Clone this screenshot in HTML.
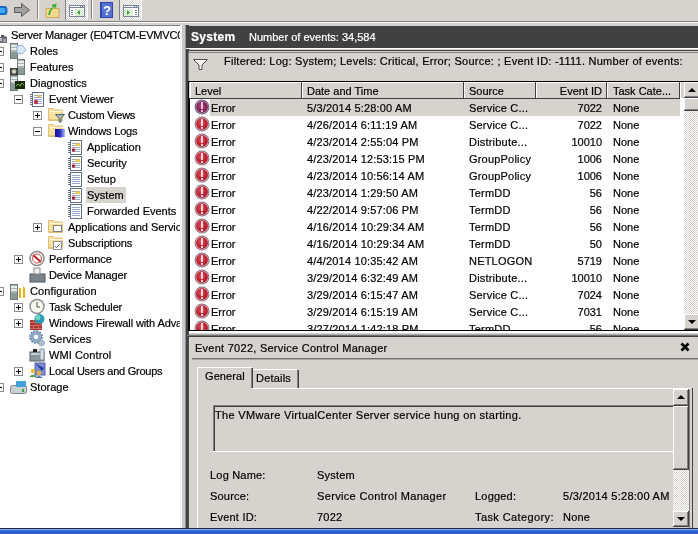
<!DOCTYPE html>
<html><head><meta charset="utf-8">
<style>
*{margin:0;padding:0;box-sizing:border-box}
html,body{width:698px;height:534px;overflow:hidden;background:#d6d3ce;font-family:"Liberation Sans",sans-serif;font-size:11px;color:#000}
.a{position:absolute}
.t{position:absolute;white-space:nowrap;will-change:transform;-webkit-text-stroke-width:0.2px}
</style></head><body>

<div class="a" style="left:0px;top:0px;width:698px;height:21px;background:#d6d3ce;"></div>
<div class="a" style="left:0px;top:21px;width:698px;height:1px;background:#808080;"></div>
<div class="a" style="left:0px;top:22px;width:698px;height:1px;background:#fff;"></div>
<div class="a" style="left:0px;top:25px;width:180px;height:1px;background:#808080;"></div>
<div class="a" style="left:0px;top:26px;width:180px;height:502px;background:#fff;"></div>
<div class="a" style="left:180px;top:25px;width:2px;height:503px;background:#f4f4f4;"></div>
<div class="a" style="left:182px;top:25px;width:3px;height:503px;background:#c8c8c8;"></div>
<div class="a" style="left:185px;top:25px;width:1px;height:503px;background:#909090;"></div>
<div class="a" style="left:186px;top:25px;width:2px;height:503px;background:#404040;"></div>
<div class="a" style="left:188px;top:25px;width:1px;height:503px;background:#505050;"></div>
<div class="a" style="left:0;top:0;width:180px;height:528px;overflow:hidden">
<div class="t" style="left:11px;top:27px;line-height:16px;height:16px;letter-spacing:-0.2px;">Server Manager (E04TCM-EVMVC01)</div>
<div class="t" style="left:30px;top:43px;line-height:16px;height:16px;">Roles</div>
<div class="t" style="left:30px;top:59px;line-height:16px;height:16px;">Features</div>
<div class="t" style="left:30px;top:75px;line-height:16px;height:16px;">Diagnostics</div>
<div class="t" style="left:49px;top:91px;line-height:16px;height:16px;">Event Viewer</div>
<div class="t" style="left:68px;top:107px;line-height:16px;height:16px;letter-spacing:-0.25px;">Custom Views</div>
<div class="t" style="left:68px;top:123px;line-height:16px;height:16px;letter-spacing:-0.18px;">Windows Logs</div>
<div class="t" style="left:87px;top:139px;line-height:16px;height:16px;">Application</div>
<div class="t" style="left:87px;top:155px;line-height:16px;height:16px;">Security</div>
<div class="t" style="left:87px;top:171px;line-height:16px;height:16px;">Setup</div>
<div class="a" style="left:86px;top:187px;width:40px;height:16px;background:#d6d3ce;"></div>
<div class="t" style="left:87px;top:187px;line-height:16px;height:16px;">System</div>
<div class="t" style="left:87px;top:203px;line-height:16px;height:16px;">Forwarded Events</div>
<div class="t" style="left:68px;top:219px;line-height:16px;height:16px;letter-spacing:-0.05px;">Applications and Services Logs</div>
<div class="t" style="left:68px;top:235px;line-height:16px;height:16px;letter-spacing:-0.15px;">Subscriptions</div>
<div class="t" style="left:49px;top:251px;line-height:16px;height:16px;">Performance</div>
<div class="t" style="left:49px;top:267px;line-height:16px;height:16px;letter-spacing:-0.15px;">Device Manager</div>
<div class="t" style="left:30px;top:283px;line-height:16px;height:16px;letter-spacing:0.1px;">Configuration</div>
<div class="t" style="left:49px;top:299px;line-height:16px;height:16px;letter-spacing:-0.15px;">Task Scheduler</div>
<div class="t" style="left:49px;top:315px;line-height:16px;height:16px;letter-spacing:-0.1px;">Windows Firewall with Advanced Security</div>
<div class="t" style="left:49px;top:331px;line-height:16px;height:16px;">Services</div>
<div class="t" style="left:49px;top:347px;line-height:16px;height:16px;letter-spacing:0.1px;">WMI Control</div>
<div class="t" style="left:49px;top:363px;line-height:16px;height:16px;letter-spacing:-0.24px;">Local Users and Groups</div>
<div class="t" style="left:30px;top:379px;line-height:16px;height:16px;">Storage</div>
</div>
<div class="a" style="left:186px;top:26px;width:512px;height:22px;background:#414141;"></div>
<div class="a" style="left:186px;top:48px;width:512px;height:1px;background:#fff;"></div>
<div class="t" style="left:191px;top:29px;line-height:16px;height:16px;letter-spacing:0.3px;color:#fff;font-weight:bold;font-size:12px">System</div>
<div class="t" style="left:249px;top:29px;line-height:16px;height:16px;color:#fff">Number of events: 34,584</div>
<div class="a" style="left:186px;top:50px;width:512px;height:1px;background:#404040;"></div>
<div class="a" style="left:186px;top:50px;width:1px;height:281px;background:#404040;"></div>
<div class="a" style="left:188px;top:52px;width:510px;height:1px;background:#808080;"></div>
<div class="a" style="left:188px;top:52px;width:1px;height:278px;background:#808080;"></div>
<div class="t" style="left:224px;top:53px;line-height:16px;height:16px;letter-spacing:0.255px;">Filtered: Log: System; Levels: Critical, Error; Source: ; Event ID: -1111. Number of events:</div>
<div class="a" style="left:188px;top:81px;width:510px;height:1px;background:#000;"></div>
<div class="a" style="left:189px;top:82px;width:509px;height:248px;background:#fff;"></div>
<div class="a" style="left:188px;top:330px;width:510px;height:1px;background:#000;"></div>
<div class="a" style="left:188px;top:81px;width:2px;height:250px;background:#000;"></div>
<div class="a" style="left:189px;top:82px;width:495px;height:17px;background:#d6d3ce;"></div>
<div class="a" style="left:189px;top:98px;width:491px;height:1px;background:#404040;"></div>
<div class="a" style="left:190px;top:82px;width:490px;height:1px;background:#fff;"></div>
<div class="a" style="left:190px;top:82px;width:1px;height:16px;background:#fff;"></div>
<div class="a" style="left:301px;top:82px;width:1px;height:16px;background:#404040;"></div>
<div class="a" style="left:302px;top:82px;width:1px;height:16px;background:#fff;"></div>
<div class="a" style="left:463px;top:82px;width:1px;height:16px;background:#404040;"></div>
<div class="a" style="left:464px;top:82px;width:1px;height:16px;background:#fff;"></div>
<div class="a" style="left:535px;top:82px;width:1px;height:16px;background:#404040;"></div>
<div class="a" style="left:536px;top:82px;width:1px;height:16px;background:#fff;"></div>
<div class="a" style="left:606px;top:82px;width:1px;height:16px;background:#404040;"></div>
<div class="a" style="left:607px;top:82px;width:1px;height:16px;background:#fff;"></div>
<div class="a" style="left:679px;top:82px;width:1px;height:16px;background:#404040;"></div>
<div class="a" style="left:680px;top:82px;width:1px;height:16px;background:#fff;"></div>
<div class="t" style="left:195px;top:84px;line-height:15px;height:15px;">Level</div>
<div class="t" style="left:307px;top:84px;line-height:15px;height:15px;">Date and Time</div>
<div class="t" style="left:469px;top:84px;line-height:15px;height:15px;">Source</div>
<div class="t" style="left:537px;top:84px;line-height:15px;height:15px;width:65px;text-align:right">Event ID</div>
<div class="t" style="left:613px;top:84px;line-height:15px;height:15px;">Task Cate...</div>
<div class="a" style="left:189px;top:99px;width:491px;height:231px;overflow:hidden">
<div class="a" style="left:21px;top:0px;width:470px;height:17px;background:#d6d3ce;"></div>
<svg class="a" style="left:5px;top:0px" width="16" height="16"><use href="#errsel"/></svg>
<div class="t" style="left:22px;top:2px;line-height:15px;height:15px;">Error</div>
<div class="t" style="left:118px;top:2px;line-height:15px;height:15px;letter-spacing:0.17px;">5/3/2014 5:28:00 AM</div>
<div class="t" style="left:280px;top:2px;line-height:15px;height:15px;letter-spacing:0.2px;">Service C...</div>
<div class="t" style="left:348px;top:2px;line-height:15px;height:15px;width:65px;text-align:right">7022</div>
<div class="t" style="left:424px;top:2px;line-height:15px;height:15px;">None</div>
<svg class="a" style="left:5px;top:17px" width="16" height="16"><use href="#err"/></svg>
<div class="t" style="left:22px;top:19px;line-height:15px;height:15px;">Error</div>
<div class="t" style="left:118px;top:19px;line-height:15px;height:15px;letter-spacing:0.17px;">4/26/2014 6:11:19 AM</div>
<div class="t" style="left:280px;top:19px;line-height:15px;height:15px;letter-spacing:0.2px;">Service C...</div>
<div class="t" style="left:348px;top:19px;line-height:15px;height:15px;width:65px;text-align:right">7022</div>
<div class="t" style="left:424px;top:19px;line-height:15px;height:15px;">None</div>
<svg class="a" style="left:5px;top:34px" width="16" height="16"><use href="#err"/></svg>
<div class="t" style="left:22px;top:36px;line-height:15px;height:15px;">Error</div>
<div class="t" style="left:118px;top:36px;line-height:15px;height:15px;letter-spacing:0.17px;">4/23/2014 2:55:04 PM</div>
<div class="t" style="left:280px;top:36px;line-height:15px;height:15px;letter-spacing:0.2px;">Distribute...</div>
<div class="t" style="left:348px;top:36px;line-height:15px;height:15px;width:65px;text-align:right">10010</div>
<div class="t" style="left:424px;top:36px;line-height:15px;height:15px;">None</div>
<svg class="a" style="left:5px;top:51px" width="16" height="16"><use href="#err"/></svg>
<div class="t" style="left:22px;top:53px;line-height:15px;height:15px;">Error</div>
<div class="t" style="left:118px;top:53px;line-height:15px;height:15px;letter-spacing:0.17px;">4/23/2014 12:53:15 PM</div>
<div class="t" style="left:280px;top:53px;line-height:15px;height:15px;letter-spacing:0.2px;">GroupPolicy</div>
<div class="t" style="left:348px;top:53px;line-height:15px;height:15px;width:65px;text-align:right">1006</div>
<div class="t" style="left:424px;top:53px;line-height:15px;height:15px;">None</div>
<svg class="a" style="left:5px;top:68px" width="16" height="16"><use href="#err"/></svg>
<div class="t" style="left:22px;top:70px;line-height:15px;height:15px;">Error</div>
<div class="t" style="left:118px;top:70px;line-height:15px;height:15px;letter-spacing:0.17px;">4/23/2014 10:56:14 AM</div>
<div class="t" style="left:280px;top:70px;line-height:15px;height:15px;letter-spacing:0.2px;">GroupPolicy</div>
<div class="t" style="left:348px;top:70px;line-height:15px;height:15px;width:65px;text-align:right">1006</div>
<div class="t" style="left:424px;top:70px;line-height:15px;height:15px;">None</div>
<svg class="a" style="left:5px;top:85px" width="16" height="16"><use href="#err"/></svg>
<div class="t" style="left:22px;top:87px;line-height:15px;height:15px;">Error</div>
<div class="t" style="left:118px;top:87px;line-height:15px;height:15px;letter-spacing:0.17px;">4/23/2014 1:29:50 AM</div>
<div class="t" style="left:280px;top:87px;line-height:15px;height:15px;letter-spacing:0.2px;">TermDD</div>
<div class="t" style="left:348px;top:87px;line-height:15px;height:15px;width:65px;text-align:right">56</div>
<div class="t" style="left:424px;top:87px;line-height:15px;height:15px;">None</div>
<svg class="a" style="left:5px;top:102px" width="16" height="16"><use href="#err"/></svg>
<div class="t" style="left:22px;top:104px;line-height:15px;height:15px;">Error</div>
<div class="t" style="left:118px;top:104px;line-height:15px;height:15px;letter-spacing:0.17px;">4/22/2014 9:57:06 PM</div>
<div class="t" style="left:280px;top:104px;line-height:15px;height:15px;letter-spacing:0.2px;">TermDD</div>
<div class="t" style="left:348px;top:104px;line-height:15px;height:15px;width:65px;text-align:right">56</div>
<div class="t" style="left:424px;top:104px;line-height:15px;height:15px;">None</div>
<svg class="a" style="left:5px;top:119px" width="16" height="16"><use href="#err"/></svg>
<div class="t" style="left:22px;top:121px;line-height:15px;height:15px;">Error</div>
<div class="t" style="left:118px;top:121px;line-height:15px;height:15px;letter-spacing:0.17px;">4/16/2014 10:29:34 AM</div>
<div class="t" style="left:280px;top:121px;line-height:15px;height:15px;letter-spacing:0.2px;">TermDD</div>
<div class="t" style="left:348px;top:121px;line-height:15px;height:15px;width:65px;text-align:right">56</div>
<div class="t" style="left:424px;top:121px;line-height:15px;height:15px;">None</div>
<svg class="a" style="left:5px;top:136px" width="16" height="16"><use href="#err"/></svg>
<div class="t" style="left:22px;top:138px;line-height:15px;height:15px;">Error</div>
<div class="t" style="left:118px;top:138px;line-height:15px;height:15px;letter-spacing:0.17px;">4/16/2014 10:29:34 AM</div>
<div class="t" style="left:280px;top:138px;line-height:15px;height:15px;letter-spacing:0.2px;">TermDD</div>
<div class="t" style="left:348px;top:138px;line-height:15px;height:15px;width:65px;text-align:right">50</div>
<div class="t" style="left:424px;top:138px;line-height:15px;height:15px;">None</div>
<svg class="a" style="left:5px;top:153px" width="16" height="16"><use href="#err"/></svg>
<div class="t" style="left:22px;top:155px;line-height:15px;height:15px;">Error</div>
<div class="t" style="left:118px;top:155px;line-height:15px;height:15px;letter-spacing:0.17px;">4/4/2014 10:35:42 AM</div>
<div class="t" style="left:280px;top:155px;line-height:15px;height:15px;letter-spacing:0.2px;">NETLOGON</div>
<div class="t" style="left:348px;top:155px;line-height:15px;height:15px;width:65px;text-align:right">5719</div>
<div class="t" style="left:424px;top:155px;line-height:15px;height:15px;">None</div>
<svg class="a" style="left:5px;top:170px" width="16" height="16"><use href="#err"/></svg>
<div class="t" style="left:22px;top:172px;line-height:15px;height:15px;">Error</div>
<div class="t" style="left:118px;top:172px;line-height:15px;height:15px;letter-spacing:0.17px;">3/29/2014 6:32:49 AM</div>
<div class="t" style="left:280px;top:172px;line-height:15px;height:15px;letter-spacing:0.2px;">Distribute...</div>
<div class="t" style="left:348px;top:172px;line-height:15px;height:15px;width:65px;text-align:right">10010</div>
<div class="t" style="left:424px;top:172px;line-height:15px;height:15px;">None</div>
<svg class="a" style="left:5px;top:187px" width="16" height="16"><use href="#err"/></svg>
<div class="t" style="left:22px;top:189px;line-height:15px;height:15px;">Error</div>
<div class="t" style="left:118px;top:189px;line-height:15px;height:15px;letter-spacing:0.17px;">3/29/2014 6:15:47 AM</div>
<div class="t" style="left:280px;top:189px;line-height:15px;height:15px;letter-spacing:0.2px;">Service C...</div>
<div class="t" style="left:348px;top:189px;line-height:15px;height:15px;width:65px;text-align:right">7024</div>
<div class="t" style="left:424px;top:189px;line-height:15px;height:15px;">None</div>
<svg class="a" style="left:5px;top:204px" width="16" height="16"><use href="#err"/></svg>
<div class="t" style="left:22px;top:206px;line-height:15px;height:15px;">Error</div>
<div class="t" style="left:118px;top:206px;line-height:15px;height:15px;letter-spacing:0.17px;">3/29/2014 6:15:19 AM</div>
<div class="t" style="left:280px;top:206px;line-height:15px;height:15px;letter-spacing:0.2px;">Service C...</div>
<div class="t" style="left:348px;top:206px;line-height:15px;height:15px;width:65px;text-align:right">7031</div>
<div class="t" style="left:424px;top:206px;line-height:15px;height:15px;">None</div>
<svg class="a" style="left:5px;top:221px" width="16" height="16"><use href="#err"/></svg>
<div class="t" style="left:22px;top:223px;line-height:15px;height:15px;">Error</div>
<div class="t" style="left:118px;top:223px;line-height:15px;height:15px;letter-spacing:0.17px;">3/27/2014 1:42:18 PM</div>
<div class="t" style="left:280px;top:223px;line-height:15px;height:15px;letter-spacing:0.2px;">TermDD</div>
<div class="t" style="left:348px;top:223px;line-height:15px;height:15px;width:65px;text-align:right">56</div>
<div class="t" style="left:424px;top:223px;line-height:15px;height:15px;">None</div>
</div>
<div class="a" style="left:684px;top:82px;width:17px;height:248px;background:repeating-conic-gradient(#ffffff 0 25%,#d6d3ce 0 50%) 0 0/2px 2px;"></div>
<div class="a" style="left:684px;top:82px;width:17px;height:16px;background:#d6d3ce;"></div>
<div class="a" style="left:684px;top:82px;width:17px;height:1px;background:#fff;"></div>
<div class="a" style="left:684px;top:82px;width:1px;height:16px;background:#fff;"></div>
<div class="a" style="left:684px;top:97px;width:17px;height:1px;background:#404040;"></div>
<div class="a" style="left:700px;top:82px;width:1px;height:16px;background:#404040;"></div>
<div class="a" style="left:685px;top:96px;width:15px;height:1px;background:#808080;"></div>
<div class="a" style="left:699px;top:83px;width:1px;height:14px;background:#808080;"></div>
<div class="a" style="left:688px;top:88px;width:0;height:0;border-left:4px solid transparent;border-right:4px solid transparent;border-bottom:4px solid #000"></div>
<div class="a" style="left:684px;top:98px;width:17px;height:13px;background:#d6d3ce;"></div>
<div class="a" style="left:684px;top:98px;width:17px;height:1px;background:#fff;"></div>
<div class="a" style="left:684px;top:98px;width:1px;height:13px;background:#fff;"></div>
<div class="a" style="left:684px;top:110px;width:17px;height:1px;background:#404040;"></div>
<div class="a" style="left:700px;top:98px;width:1px;height:13px;background:#404040;"></div>
<div class="a" style="left:685px;top:109px;width:15px;height:1px;background:#808080;"></div>
<div class="a" style="left:699px;top:99px;width:1px;height:11px;background:#808080;"></div>
<div class="a" style="left:684px;top:314px;width:17px;height:16px;background:#d6d3ce;"></div>
<div class="a" style="left:684px;top:314px;width:17px;height:1px;background:#fff;"></div>
<div class="a" style="left:684px;top:314px;width:1px;height:16px;background:#fff;"></div>
<div class="a" style="left:684px;top:329px;width:17px;height:1px;background:#404040;"></div>
<div class="a" style="left:700px;top:314px;width:1px;height:16px;background:#404040;"></div>
<div class="a" style="left:685px;top:328px;width:15px;height:1px;background:#808080;"></div>
<div class="a" style="left:699px;top:315px;width:1px;height:14px;background:#808080;"></div>
<div class="a" style="left:688px;top:320px;width:0;height:0;border-left:4px solid transparent;border-right:4px solid transparent;border-top:4px solid #000"></div>
<div class="a" style="left:680px;top:98px;width:4px;height:232px;background:#fff;"></div>
<div class="a" style="left:189px;top:331px;width:509px;height:2px;background:#fff;"></div>
<div class="a" style="left:189px;top:334px;width:509px;height:1px;background:#b0b0b0;"></div>
<div class="a" style="left:186px;top:335px;width:512px;height:1px;background:#707070;"></div>
<div class="a" style="left:186px;top:336px;width:512px;height:1px;background:#404040;"></div>
<div class="a" style="left:186px;top:335px;width:1px;height:193px;background:#404040;"></div>
<div class="t" style="left:195px;top:340px;line-height:16px;height:16px;letter-spacing:0.26px;">Event 7022, Service Control Manager</div>
<div class="a" style="left:192px;top:358px;width:506px;height:1px;background:#707070;"></div>
<div class="a" style="left:192px;top:359px;width:506px;height:1px;background:#a8a8a8;"></div>
<div class="a" style="left:197px;top:367px;width:55px;height:1px;background:#fff;"></div>
<div class="a" style="left:197px;top:367px;width:1px;height:161px;background:#fff;"></div>
<div class="a" style="left:251px;top:368px;width:1px;height:20px;background:#808080;"></div>
<div class="a" style="left:252px;top:368px;width:1px;height:20px;background:#404040;"></div>
<div class="t" style="left:205px;top:368px;line-height:16px;height:16px;letter-spacing:0.1px;">General</div>
<div class="a" style="left:253px;top:369px;width:44px;height:1px;background:#fff;"></div>
<div class="a" style="left:297px;top:370px;width:1px;height:18px;background:#808080;"></div>
<div class="a" style="left:298px;top:370px;width:1px;height:18px;background:#404040;"></div>
<div class="t" style="left:256px;top:370px;line-height:16px;height:16px;letter-spacing:0.2px;">Details</div>
<div class="a" style="left:252px;top:388px;width:438px;height:1px;background:#fff;"></div>
<div class="a" style="left:689px;top:390px;width:1px;height:138px;background:#808080;"></div>
<div class="a" style="left:673px;top:389px;width:16px;height:138px;background:repeating-conic-gradient(#ffffff 0 25%,#d6d3ce 0 50%) 0 0/2px 2px;"></div>
<div class="a" style="left:673px;top:389px;width:16px;height:17px;background:#d6d3ce;"></div>
<div class="a" style="left:673px;top:389px;width:16px;height:1px;background:#fff;"></div>
<div class="a" style="left:673px;top:389px;width:1px;height:17px;background:#fff;"></div>
<div class="a" style="left:673px;top:405px;width:16px;height:1px;background:#404040;"></div>
<div class="a" style="left:688px;top:389px;width:1px;height:17px;background:#404040;"></div>
<div class="a" style="left:674px;top:404px;width:14px;height:1px;background:#808080;"></div>
<div class="a" style="left:687px;top:390px;width:1px;height:15px;background:#808080;"></div>
<div class="a" style="left:677px;top:395px;width:0;height:0;border-left:4px solid transparent;border-right:4px solid transparent;border-bottom:4px solid #000"></div>
<div class="a" style="left:673px;top:406px;width:16px;height:64px;background:#d6d3ce;"></div>
<div class="a" style="left:673px;top:406px;width:16px;height:1px;background:#fff;"></div>
<div class="a" style="left:673px;top:406px;width:1px;height:64px;background:#fff;"></div>
<div class="a" style="left:673px;top:469px;width:16px;height:1px;background:#404040;"></div>
<div class="a" style="left:688px;top:406px;width:1px;height:64px;background:#404040;"></div>
<div class="a" style="left:674px;top:468px;width:14px;height:1px;background:#808080;"></div>
<div class="a" style="left:687px;top:407px;width:1px;height:62px;background:#808080;"></div>
<div class="a" style="left:673px;top:511px;width:16px;height:16px;background:#d6d3ce;"></div>
<div class="a" style="left:673px;top:511px;width:16px;height:1px;background:#fff;"></div>
<div class="a" style="left:673px;top:511px;width:1px;height:16px;background:#fff;"></div>
<div class="a" style="left:673px;top:526px;width:16px;height:1px;background:#404040;"></div>
<div class="a" style="left:688px;top:511px;width:1px;height:16px;background:#404040;"></div>
<div class="a" style="left:674px;top:525px;width:14px;height:1px;background:#808080;"></div>
<div class="a" style="left:687px;top:512px;width:1px;height:14px;background:#808080;"></div>
<div class="a" style="left:677px;top:517px;width:0;height:0;border-left:4px solid transparent;border-right:4px solid transparent;border-top:4px solid #000"></div>
<div class="a" style="left:692px;top:388px;width:1px;height:140px;background:#404040;"></div>
<div class="a" style="left:213px;top:405px;width:460px;height:1px;background:#808080;"></div>
<div class="a" style="left:213px;top:405px;width:1px;height:46px;background:#808080;"></div>
<div class="a" style="left:214px;top:406px;width:459px;height:1px;background:#404040;"></div>
<div class="a" style="left:214px;top:406px;width:1px;height:45px;background:#404040;"></div>
<div class="a" style="left:213px;top:451px;width:461px;height:1px;background:#fff;"></div>
<div class="t" style="left:215px;top:407px;line-height:16px;height:16px;letter-spacing:0.33px;">The VMware VirtualCenter Server service hung on starting.</div>
<div class="t" style="left:210px;top:467px;line-height:16px;height:16px;letter-spacing:0.2px;">Log Name:</div>
<div class="t" style="left:317px;top:467px;line-height:16px;height:16px;letter-spacing:0.2px;">System</div>
<div class="t" style="left:210px;top:488px;line-height:16px;height:16px;letter-spacing:0.2px;">Source:</div>
<div class="t" style="left:317px;top:488px;line-height:16px;height:16px;letter-spacing:0.34px;">Service Control Manager</div>
<div class="t" style="left:475px;top:488px;line-height:16px;height:16px;letter-spacing:0.2px;">Logged:</div>
<div class="t" style="left:563px;top:488px;line-height:16px;height:16px;letter-spacing:0.27px;">5/3/2014 5:28:00 AM</div>
<div class="t" style="left:210px;top:509px;line-height:16px;height:16px;letter-spacing:0.2px;">Event ID:</div>
<div class="t" style="left:317px;top:509px;line-height:16px;height:16px;letter-spacing:0.2px;">7022</div>
<div class="t" style="left:475px;top:509px;line-height:16px;height:16px;letter-spacing:0.4px;">Task Category:</div>
<div class="t" style="left:563px;top:509px;line-height:16px;height:16px;letter-spacing:0.2px;">None</div>
<svg class="a" style="left:0;top:0" width="698" height="534" viewBox="0 0 698 534">
<defs>
<pattern id="chk" width="2" height="2" patternUnits="userSpaceOnUse"><rect width="2" height="2" fill="#d6d3ce"/><rect width="1" height="1" fill="#fff"/><rect x="1" y="1" width="1" height="1" fill="#fff"/></pattern>
<radialGradient id="rg" cx="0.45" cy="0.4" r="0.6"><stop offset="0" stop-color="#e05a66"/><stop offset="0.6" stop-color="#c22634"/><stop offset="1" stop-color="#a41c30"/></radialGradient>
<symbol id="err" viewBox="0 0 16 16" width="16" height="16">
<circle cx="8" cy="8" r="7.5" fill="#8c7a82"/>
<circle cx="8" cy="8" r="6.6" fill="#dc9aa4"/>
<circle cx="8" cy="8" r="5.8" fill="url(#rg)"/>
<rect x="7" y="3" width="2" height="7" fill="#f6d6dc"/>
<rect x="7" y="11" width="2" height="2" fill="#f6d6dc"/>
</symbol>
<radialGradient id="rgs" cx="0.45" cy="0.4" r="0.6"><stop offset="0" stop-color="#a84878"/><stop offset="0.6" stop-color="#8c2a5c"/><stop offset="1" stop-color="#742050"/></radialGradient>
<symbol id="errsel" viewBox="0 0 16 16" width="16" height="16">
<circle cx="8" cy="8" r="7.5" fill="#6a6a90"/>
<circle cx="8" cy="8" r="6.6" fill="#b088a8"/>
<circle cx="8" cy="8" r="5.8" fill="url(#rgs)"/>
<rect x="7" y="3" width="2" height="7" fill="#e8c8e0"/>
<rect x="7" y="11" width="2" height="2" fill="#e8c8e0"/>
</symbol>
<symbol id="exp" viewBox="0 0 9 9" width="9" height="9">
<rect x="0.5" y="0.5" width="8" height="8" fill="#fff" stroke="#8c8c8c"/>
<rect x="2" y="4" width="5" height="1" fill="#000"/>
</symbol>
<symbol id="expp" viewBox="0 0 9 9" width="9" height="9">
<rect x="0.5" y="0.5" width="8" height="8" fill="#fff" stroke="#8c8c8c"/>
<rect x="2" y="4" width="5" height="1" fill="#000"/>
<rect x="4" y="2" width="1" height="5" fill="#000"/>
</symbol>
<symbol id="log" viewBox="0 0 14 15" width="14" height="15">
<rect x="2.5" y="0.5" width="11" height="14" fill="#fff" stroke="#5e6e8c"/>
<g fill="#9aa8c8"><rect x="4" y="3" width="8" height="1"/><rect x="4" y="5" width="8" height="1"/><rect x="4" y="7" width="8" height="1"/><rect x="4" y="9" width="8" height="1"/><rect x="4" y="11" width="8" height="1"/></g>
<g fill="#6a7080"><rect x="0" y="2" width="3" height="1"/><rect x="0" y="4" width="3" height="1"/><rect x="0" y="6" width="3" height="1"/><rect x="0" y="8" width="3" height="1"/><rect x="0" y="10" width="3" height="1"/><rect x="0" y="12" width="3" height="1"/></g>
</symbol>
<symbol id="logx" viewBox="0 0 14 15" width="14" height="15">
<use href="#log"/>
<path d="M10 2 L13 6 L7 6 Z" fill="#f0c840"/>
<circle cx="5.5" cy="10" r="1.8" fill="#b02040"/>
</symbol>
<symbol id="folder" viewBox="0 0 16 14" width="16" height="14">
<path d="M0.5 1.5 h5 l1 1.5 h8 v10.5 h-14 z" fill="#f8e2a2" stroke="#dcc078"/>
<rect x="1" y="4" width="14" height="1" fill="#fff4d0"/><rect x="1" y="12" width="14" height="1" fill="#e8c880"/>
</symbol>
<symbol id="server" viewBox="0 0 8 16" width="8" height="16">
<rect x="0.5" y="0.5" width="7" height="15" fill="#a8b4b0" stroke="#6c7a78"/>
<rect x="1" y="2" width="6" height="2" fill="#e8ecec"/><rect x="1" y="5" width="6" height="2" fill="#e8ecec"/>
<rect x="1" y="9" width="6" height="6" fill="#8a9a96"/>
</symbol>
</defs>
<!-- toolbar -->
<g>
<path d="M0 6 h5 q2.5 0 2.5 4.5 q0 4.5 -2.5 4.5 h-5 z" fill="#1a6cc8"/>
<path d="M0 8 h4 q1.5 0 1.5 2.5 q0 2.5 -1.5 2.5 h-4 z" fill="#40a8f0"/>
<path d="M14.5 7.5 h7 v-4 l8 6.5 l-8 6.5 v-4 h-7 z" fill="#a0a0a0" stroke="#5a5a5a"/>
<rect x="37" y="0" width="1" height="19" fill="#808080"/><rect x="38" y="0" width="1" height="19" fill="#fff"/>
<path d="M46 8.5 h13 v9 h-13 z" fill="#f2d890" stroke="#d0a850"/>
<path d="M48 15 q1 -6 5 -8 l-1.5 -2 l5 -1.5 l-0.5 5 l-1.5 -1.5 q-3.5 2 -4.5 8 z" fill="#3cb030"/>
<rect x="65" y="0" width="1" height="20" fill="#808080"/>
<rect x="66" y="0" width="21" height="20" fill="url(#chk)"/>
<rect x="87" y="0" width="1" height="20" fill="#fff"/>
<rect x="69.5" y="5.5" width="15" height="11" fill="#fff" stroke="#7a8498"/>
<rect x="70" y="6" width="14" height="1" fill="#fff"/><rect x="70" y="7" width="14" height="1" fill="#7a8498"/><rect x="80" y="6" width="1" height="1" fill="#7a8498"/><rect x="82" y="6" width="1" height="1" fill="#7a8498"/>
<rect x="74.5" y="8.5" width="0" height="8" stroke="#7a8498"/>
<rect x="71" y="10" width="2" height="1" fill="#7a8498"/><rect x="71" y="12" width="2" height="1" fill="#7a8498"/><rect x="71" y="14" width="2" height="1" fill="#7a8498"/>
<rect x="75" y="9" width="9" height="7" fill="#e0f0d8"/>
<path d="M77 12.5 l3 -2.5 v5 z" fill="#40a040"/>
<rect x="91" y="0" width="1" height="19" fill="#808080"/><rect x="92" y="0" width="1" height="19" fill="#fff"/>
<rect x="100" y="2" width="13" height="16" fill="#2f48b0"/>
<rect x="102" y="3" width="10" height="14" fill="#5670d0"/>
<text x="103" y="15" font-family="Liberation Sans" font-weight="bold" font-size="13" fill="#fff">?</text>
<rect x="119" y="0" width="1" height="20" fill="#808080"/>
<rect x="120" y="0" width="21" height="20" fill="url(#chk)"/>
<rect x="141" y="0" width="1" height="20" fill="#fff"/>
<rect x="123.5" y="5.5" width="15" height="11" fill="#fff" stroke="#7a8498"/>
<rect x="124" y="6" width="14" height="1" fill="#fff"/><rect x="124" y="7" width="14" height="1" fill="#7a8498"/><rect x="134" y="6" width="1" height="1" fill="#7a8498"/><rect x="136" y="6" width="1" height="1" fill="#7a8498"/>
<rect x="133.5" y="8.5" width="0" height="8" stroke="#7a8498"/>
<rect x="135" y="10" width="2" height="1" fill="#7a8498"/><rect x="135" y="12" width="2" height="1" fill="#7a8498"/><rect x="135" y="14" width="2" height="1" fill="#7a8498"/>
<rect x="124" y="9" width="9" height="7" fill="#e0f0d8"/>
<path d="M127 10 l3 2.5 l-3 2.5 z" fill="#40a040"/>
</g>
<!-- tree icons -->
<g>
<rect x="0" y="37" width="7" height="6" fill="#6c7074"/><rect x="1" y="35" width="3" height="2" fill="#505458"/><rect x="4" y="36" width="2" height="1" fill="#808488"/><rect x="0" y="38" width="2" height="3" fill="#b8bcc0"/><rect x="3" y="39" width="3" height="3" fill="#a0a4a8"/>
<use href="#exp" x="-5" y="47"/>
<use href="#exp" x="-5" y="63"/>
<use href="#exp" x="-5" y="79"/>
<use href="#server" x="10" y="43"/>
<path d="M17 46 l5 -1 l4 5 l-4 4 l-5 -1 z" fill="#d8e8f8" stroke="#90b0d0"/>
<use href="#server" x="17" y="59"/>
<rect x="10" y="68" width="8" height="7" fill="#404040"/><circle cx="14" cy="71.5" r="2.3" fill="#d0d0c0"/>
<use href="#server" x="10" y="75"/>
<rect x="15" y="81" width="10" height="8" fill="#1c2a10"/><path d="M16 86 l2 -2 l2 2 l2 -3 l2 2" stroke="#70c040" fill="none"/>
<use href="#exp" x="14" y="95"/>
<use href="#log" x="30" y="92"/>
<path d="M39 94 l2 3 h-4 z" fill="#f0c840"/><circle cx="36" cy="102" r="2.2" fill="#c03050"/>
<use href="#expp" x="33" y="111"/>
<use href="#folder" x="48" y="107"/>
<path d="M55.5 114.5 h9 l-3.5 4 v4 l-2 -1 v-3 z" fill="#a8b8b8" stroke="#506868" stroke-width="1"/>
<use href="#exp" x="33" y="127"/>
<use href="#folder" x="48" y="123"/>
<defs><linearGradient id="mon" x1="0" x2="1"><stop offset="0" stop-color="#10109a"/><stop offset="0.5" stop-color="#2830c0"/><stop offset="1" stop-color="#b0c0f4"/></linearGradient></defs><rect x="55" y="129" width="10" height="8" fill="url(#mon)"/><rect x="58" y="137" width="4" height="1" fill="#a0a8c8"/>
<use href="#logx" x="68" y="140"/>
<use href="#logx" x="68" y="156"/>
<use href="#log" x="68" y="172"/>
<use href="#logx" x="68" y="188"/>
<use href="#log" x="68" y="204"/>
<use href="#expp" x="33" y="223"/>
<use href="#folder" x="48" y="219"/>
<rect x="53.5" y="225.5" width="8" height="6" fill="#fff" stroke="#808080"/>
<use href="#folder" x="48" y="235"/>
<rect x="53.5" y="241.5" width="8" height="8" fill="#fff" stroke="#9090a0"/><path d="M55 246 l1.5 1.5 l3 -3" stroke="#4060c0" fill="none"/>
<use href="#expp" x="14" y="255"/>
<circle cx="37" cy="258.5" r="7" fill="#fff" stroke="#8a8a8a" stroke-width="1.5"/>
<path d="M33 255 l8 7" stroke="#c02020" stroke-width="2"/><circle cx="37" cy="258.5" r="4.5" fill="none" stroke="#d04040" stroke-width="1"/>
<rect x="30" y="274" width="15" height="8" fill="#7c848c" stroke="#50585e"/><rect x="34" y="268" width="6" height="6" fill="#f0f0f0" stroke="#8a9090"/>
<use href="#exp" x="-5" y="287"/>
<use href="#server" x="10" y="284"/>
<path d="M19 288 l2 0 v10 h-2 z M23 286 l2 2 v10 h-2 z" fill="#e8b020"/>
<use href="#expp" x="14" y="303"/>
<circle cx="37" cy="306.5" r="7" fill="#f8f8f0" stroke="#909090" stroke-width="1.5"/><path d="M37 302 v5 h3" stroke="#505050" fill="none"/>
<use href="#expp" x="14" y="319"/>
<rect x="30" y="320" width="12" height="10" fill="#a8342c"/><path d="M30 322.5 h12 M30 325.5 h12 M30 328.5 h12 M33.5 320 v2.5 M38.5 320 v2.5 M36 322.5 v3 M41 322.5 v3 M33.5 325.5 v3 M38.5 325.5 v3" stroke="#d88878" stroke-width="0.7"/>
<circle cx="39.5" cy="319" r="5" fill="#2a9ab8"/><circle cx="38" cy="317.5" r="2.5" fill="#70d8c0"/>
<circle cx="36" cy="337" r="6" fill="#90a8c8" stroke="#6a88b0" stroke-width="1.8" stroke-dasharray="1.8 1.3"/><circle cx="36" cy="337" r="2.2" fill="#fff"/>
<circle cx="41.5" cy="343" r="3" fill="#b0c0d0" stroke="#7088a8" stroke-dasharray="1.2 0.8"/>
<rect x="30" y="352" width="14" height="9" fill="#8c969c" stroke="#5a6268"/><rect x="31" y="353" width="12" height="2" fill="#c8d0d4"/><rect x="40" y="349" width="4" height="11" fill="#d8e0e8" stroke="#8090a0"/><rect x="33" y="349" width="4" height="3" fill="#202020"/>
<use href="#expp" x="14" y="367"/>
<rect x="35" y="363" width="10" height="12" fill="#8088d0" stroke="#5060a8"/><path d="M36 364 l6 7 l2 -3 z" fill="#2040a0"/><circle cx="33" cy="371" r="2.3" fill="#e8c040"/><path d="M29 377 q4 -5 8 0 z" fill="#50a050"/><circle cx="39" cy="373" r="2.3" fill="#e8b040"/><path d="M35 378 q4 -4 8 0 z" fill="#4a70b8"/>
<use href="#exp" x="-5" y="383"/>
<rect x="10.5" y="385.5" width="16" height="8" rx="2" fill="#c8d0d4" stroke="#7a8488"/><rect x="16" y="381" width="10" height="6" rx="1" fill="#40a0d8"/><rect x="22" y="389" width="2" height="3" fill="#40a040"/>
</g>
<!-- funnel -->
<path d="M193.5 59.5 h14 l-5.5 5.5 v4.5 l-3 0 v-4.5 z" fill="#f4f4f4" stroke="#505050"/>
<!-- close x -->
<path d="M681.5 343.5 l7 7 M688.5 343.5 l-7 7" stroke="#000" stroke-width="2.6"/>
</svg>

<div class="a" style="left:0px;top:528px;width:698px;height:6px;background:linear-gradient(#1a2a48 0,#1a2a48 1px,#88a8ee 1px,#88a8ee 2px,#4070d8 2px,#3160cc 4px,#2f5cc8 6px);"></div>
</body></html>
